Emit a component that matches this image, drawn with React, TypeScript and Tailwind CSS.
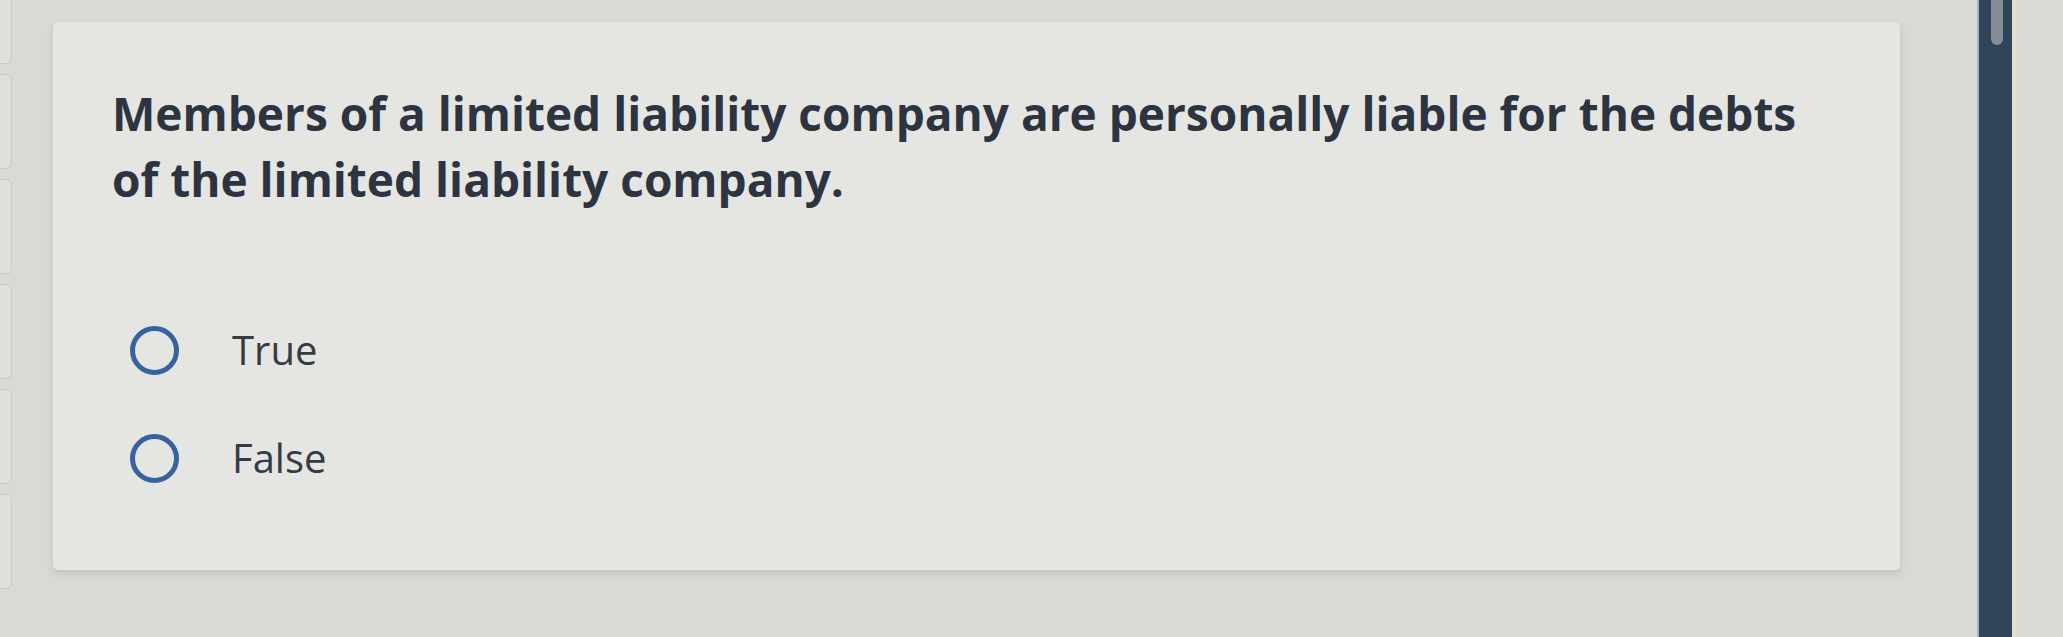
import React from "react";

function Radio({ label }: { label: string }) {
  return (
    <div className="flex items-center h-[56px]">
      <div className="w-[49px] h-[49px] rounded-full border-[5px] border-[#3563a0] shrink-0" />
      <span className="ml-[53px] text-[40px] leading-[56px] text-[#353b46]">{label}</span>
    </div>
  );
}

export default function App() {
  return (
    <div
      className="w-[2063px] h-[637px] bg-[#d9dad6] flex overflow-hidden"
      style={{ fontFamily: '"Open Sans", "Noto Sans", sans-serif' }}
    >
      {/* left stacked tabs */}
      <div className="w-[53px] shrink-0 flex flex-col gap-[10px]">
        <div className="w-[12px] h-[72px] -mt-[8px] rounded-br-[6px] bg-[#dfe0dc] border-r border-b border-[#c9cac6]" />
        <div className="w-[12px] h-[95px] rounded-r-[6px] bg-[#dfe0dc] border-r border-y border-[#c9cac6]" />
        <div className="w-[12px] h-[95px] rounded-r-[6px] bg-[#dfe0dc] border-r border-y border-[#c9cac6]" />
        <div className="w-[12px] h-[95px] rounded-r-[6px] bg-[#dfe0dc] border-r border-y border-[#c9cac6]" />
        <div className="w-[12px] h-[95px] rounded-r-[6px] bg-[#dfe0dc] border-r border-y border-[#c9cac6]" />
        <div className="w-[12px] h-[95px] rounded-r-[6px] bg-[#dfe0dc] border-r border-y border-[#c9cac6]" />
      </div>

      {/* card column */}
      <div className="w-[1847px] shrink-0 pt-[22px]">
        <div className="h-[548px] rounded-[5px] bg-[#e5e6e1] shadow-[0_4px_8px_rgba(0,0,0,0.10)] pl-[59px] pt-[58px]">
          <h1 className="text-[46px] leading-[66px] font-bold text-[#2c3441] w-[1760px]">
            Members of a limited liability company are personally liable for the debts
            <br />
            of the limited liability company.
          </h1>
          <div className="mt-[110px] flex flex-col gap-[52px] pl-[18px]">
            <Radio label="True" />
            <Radio label="False" />
          </div>
        </div>
      </div>

      <div className="w-[77px] shrink-0" />

      {/* scrollbar */}
      <div className="w-[35px] shrink-0 bg-[#30455a] border-l-[2px] border-[#9fb4c8] flex justify-center">
        <div className="w-[12px] h-[45px] rounded-b-full bg-[#868d93] ml-[2px]" />
      </div>
      <div className="w-[4px] shrink-0 bg-[#e8dfcc]" />
      <div className="flex-1 bg-[#dadbd7]" />
    </div>
  );
}
